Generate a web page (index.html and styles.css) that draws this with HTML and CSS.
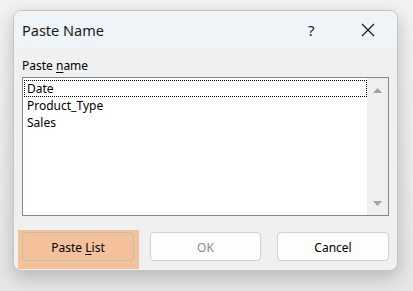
FILE: index.html
```html
<!DOCTYPE html>
<html>
<head>
<meta charset="utf-8">
<link rel="stylesheet" href="styles.css">
</head>
<body>
<div class="screen">
  <div class="dialog">
    <div class="titlebar">
      <span class="title">Paste Name</span>
      <span class="help">?</span>
      <span class="close">
        <svg width="14" height="14" viewBox="0 0 14 14"><path d="M1 1 L13 13 M13 1 L1 13" stroke="#1a1a1a" stroke-width="1.2" fill="none"/></svg>
      </span>
    </div>
    <div class="content">
      <div class="label">Paste <span class="ul">n</span>ame</div>
      <div class="list">
        <div class="items">
          <div class="item focus">Date</div>
          <div class="item">Product_Type</div>
          <div class="item">Sales</div>
        </div>
        <div class="scrollbar">
          <svg class="arrow" width="9" height="5" viewBox="0 0 9 5"><path d="M0 5 L4.5 0 L9 5 Z" fill="#a3a3a3"/></svg>
          <svg class="arrow" width="9" height="5" viewBox="0 0 9 5"><path d="M0 0 L4.5 5 L9 0 Z" fill="#a3a3a3"/></svg>
        </div>
      </div>
      <div class="buttons">
        <div class="btn primary"><span>Paste <span class="ul">L</span>ist</span></div>
        <div class="btn disabled"><span>OK</span></div>
        <div class="btn"><span>Cancel</span></div>
      </div>
    </div>
  </div>
  <div class="highlight"></div>
</div>
</body>
</html>
```
FILE: styles.css
```css
html, body {
  margin: 0;
  padding: 0;
}
body {
  width: 413px;
  height: 291px;
  overflow: hidden;
  background: #ebebeb;
  font-family: "Noto Sans", "Open Sans", sans-serif;
  color: #000;
}
.screen {
  position: relative;
  width: 413px;
  height: 291px;
  padding: 10px 0 0 13px;
  box-sizing: border-box;
  background: linear-gradient(#f2f2f2, #e6e6e6);
}
.dialog {
  position: relative;
  width: 385px;
  height: 261px;
  box-sizing: border-box;
  border: 1px solid #c6c6c6;
  border-radius: 8px;
  overflow: hidden;
  background: #f0f0f0;
  box-shadow: 0 6px 18px rgba(0,0,0,0.22);
}
.titlebar {
  height: 37px;
  background: #eef4f8;
  display: flex;
  align-items: center;
  padding-left: 8px;
}
.title {
  font-size: 14.5px;
  color: #1b1b1b;
  flex: 1;
  padding-top: 1px;
}
.help {
  font-size: 15px;
  color: #1b1b1b;
  width: 14px;
  margin-right: 39px;
  padding-top: 1px;
}
.close {
  width: 14px;
  height: 14px;
  margin-right: 22px;
  display: flex;
}
.content {
  padding: 9px 8px 0 8px;
}
.label {
  font-size: 12px;
  line-height: 17px;
  height: 17px;
  margin-bottom: 3px;
}
.ul {
  text-decoration: underline;
  text-underline-offset: 2px;
}
.list {
  height: 139px;
  box-sizing: border-box;
  border: 1px solid #828790;
  background: #fff;
  display: flex;
}
.items {
  flex: 1;
  padding: 2px 0 0 1px;
}
.item {
  height: 17px;
  box-sizing: border-box;
  border: 1px solid transparent;
  font-size: 12px;
  line-height: 15px;
  padding-left: 2px;
}
.item.focus {
  border: 1px dotted #000;
}
.scrollbar {
  width: 21px;
  background: #f0f0f0;
  display: flex;
  flex-direction: column;
  justify-content: space-between;
  align-items: center;
  padding: 10px 0 9px 0;
  box-sizing: border-box;
}
.arrow {
  display: block;
  margin-right: 1px;
}
.buttons {
  margin-top: 16px;
  display: grid;
  grid-template-columns: 112px 111px 112px;
  justify-content: space-between;
}
.btn {
  position: relative;
  z-index: 2;
  height: 29px;
  box-sizing: border-box;
  border: 1px solid #d0d0d0;
  border-radius: 4px;
  background: #fdfdfd;
  font-size: 12px;
  display: flex;
  align-items: center;
  justify-content: center;
  padding-top: 1px;
}
.btn.primary {
  background: transparent;
  border-color: #b3c5a3;
}
.btn.disabled {
  color: #8c8c8c;
}
.highlight {
  position: absolute;
  left: 18px;
  top: 230px;
  width: 121px;
  height: 39px;
  background: #f4c19c;
  z-index: 1;
}
```
